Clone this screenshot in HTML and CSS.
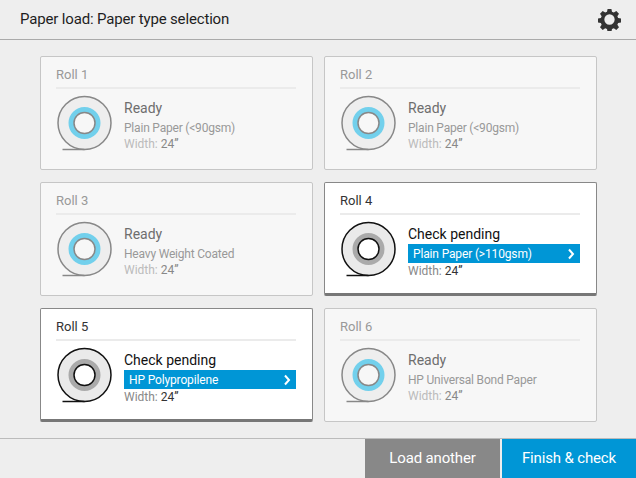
FILE: index.html
```html
<!DOCTYPE html>
<html lang="en">
<head>
<meta charset="utf-8">
<title>Paper load</title>
<link rel="stylesheet" href="styles.css">
</head>
<body>
<svg class="defs" width="0" height="0" aria-hidden="true">
  <symbol id="roll" viewBox="0 0 58 58">
    <circle class="roll-body" cx="28.5" cy="28" r="26.500"/>
    <circle class="roll-band" cx="28.5" cy="28" r="13.500"/>
    <circle class="roll-core" cx="28.5" cy="28" r="10.500"/>
    <path class="roll-tail" d="M6.500 54.500H28.500"/>
  </symbol>
</svg>
<div class="app">
  <header class="topbar">
    <h1 class="title">Paper load: Paper type selection</h1>
    <svg class="gear" viewBox="0 0 24 24" aria-hidden="true"><path fill-rule="evenodd" d="M10 1h4l.6 3 1.900.8 2.600-1.700 2.800 2.800-1.700 2.600.8 1.900 3 .6v4l-3 .6-.8 1.900 1.700 2.600-2.800 2.800-2.600-1.700-1.900.8-.6 3h-4l-.6-3-1.900-.8-2.600 1.700-2.800-2.800 1.700-2.600-.8-1.900-3-.6v-4l3-.6.8-1.900-1.700-2.600 2.800-2.800 2.600 1.700 1.900-.8zM12 6.600a5.400 5.400 0 1 0 0 10.800a5.400 5.400 0 0 0 0-10.800z"/></svg>
  </header>
  <main class="grid">
    <section class="card">
      <div class="card-title">Roll 1</div>
      <div class="card-body">
        <svg class="roll"><use href="#roll"/></svg>
        <div class="info"><div class="status">Ready</div><div class="paper">Plain Paper (&lt;90gsm)</div><div class="width"><span class="width-label">Width:</span> 24”</div></div>
      </div>
    </section>
    <section class="card">
      <div class="card-title">Roll 2</div>
      <div class="card-body">
        <svg class="roll"><use href="#roll"/></svg>
        <div class="info"><div class="status">Ready</div><div class="paper">Plain Paper (&lt;90gsm)</div><div class="width"><span class="width-label">Width:</span> 24”</div></div>
      </div>
    </section>
    <section class="card">
      <div class="card-title">Roll 3</div>
      <div class="card-body">
        <svg class="roll"><use href="#roll"/></svg>
        <div class="info"><div class="status">Ready</div><div class="paper">Heavy Weight Coated</div><div class="width"><span class="width-label">Width:</span> 24”</div></div>
      </div>
    </section>
    <section class="card active">
      <div class="card-title">Roll 4</div>
      <div class="card-body">
        <svg class="roll"><use href="#roll"/></svg>
        <div class="info"><div class="status">Check pending</div>
          <div class="picker"><span class="picker-text">Plain Paper (&gt;110gsm)</span><svg class="chev" viewBox="0 0 8 12" aria-hidden="true"><path d="M2 1.500 6 6 2 10.500"/></svg></div>
          <div class="width"><span class="width-label">Width:</span> 24”</div></div>
      </div>
    </section>
    <section class="card active">
      <div class="card-title">Roll 5</div>
      <div class="card-body">
        <svg class="roll"><use href="#roll"/></svg>
        <div class="info"><div class="status">Check pending</div>
          <div class="picker"><span class="picker-text">HP Polypropilene</span><svg class="chev" viewBox="0 0 8 12" aria-hidden="true"><path d="M2 1.500 6 6 2 10.500"/></svg></div>
          <div class="width"><span class="width-label">Width:</span> 24”</div></div>
      </div>
    </section>
    <section class="card">
      <div class="card-title">Roll 6</div>
      <div class="card-body">
        <svg class="roll"><use href="#roll"/></svg>
        <div class="info"><div class="status">Ready</div><div class="paper">HP Universal Bond Paper</div><div class="width"><span class="width-label">Width:</span> 24”</div></div>
      </div>
    </section>
  </main>
  <footer class="footer">
    <button class="btn btn-grey">Load another</button>
    <button class="btn btn-blue">Finish &amp; check</button>
  </footer>
</div>
</body>
</html>
```
FILE: styles.css
```css
* { box-sizing: border-box; }
html, body { margin: 0; padding: 0; }
body { background: #eeeeee; font-family: Roboto, "Liberation Sans", sans-serif; color: #222; overflow: hidden; }
.defs { position: absolute; }
.app { width: 636px; height: 478px; display: flex; flex-direction: column; }
.topbar { height: 40px; border-bottom: 1px solid #aaaaaa; display: flex; align-items: center; justify-content: space-between; padding: 0 15px 1px 20px; flex: none; }
.title { margin: 0; font-size: 15px; font-weight: 400; color: #1e1e1e; letter-spacing: -0.16px; }
.gear { width: 23px; height: 23px; fill: #333; }
.grid { display: grid; grid-template-columns: 273px 273px; grid-auto-rows: 114px; column-gap: 11px; row-gap: 12px; padding: 16px 0 0 40px; flex: 1; }
.card { background: #f7f7f7; border: 1px solid #c6c6c6; border-radius: 2px; padding: 0 16px 0 15px; color: #999; }
.card-title { height: 32px; border-bottom: 2px solid #ebebeb; font-size: 13px; line-height: 35px; }
.card-body { display: flex; padding-top: 6px; }
.roll { width: 58px; height: 58px; flex: none; margin-right: 10px; --body: #888; --fill: #eeeeee; --band: #72d0ec; --core: #f7f7f7; --corestroke: #888; }
.roll-body { fill: var(--fill); stroke: var(--body); stroke-width: 1.500; }
.roll-core { fill: var(--core); stroke: var(--corestroke); stroke-width: 1.500; }
.roll-band { fill: var(--band); stroke: var(--band); stroke-width: 5; }
.roll-tail { stroke: var(--body); stroke-width: 1.500; fill: none; }
.info { flex: 1; min-width: 0; }
.status { font-size: 14px; line-height: 18px; margin-top: 4px; color: #6e6e6e; }
.paper { font-size: 12px; line-height: 16px; margin-top: 3px; color: #999; letter-spacing: -0.2px; }
.width { font-size: 12px; line-height: 16px; color: #888; }
.width-label { color: #bbb; }
.active { background: #fff; border-color: #888; border-bottom: 3px solid #777; color: #333; }
.active .roll { --body: #111; --fill: #eaeaea; --band: #aaaaaa; --core: #fff; --corestroke: #111; }
.active .status { color: #111; }
.active .width { color: #333; }
.active .width-label { color: #888; }
.picker { height: 19px; background: #0096d6; color: #fff; font-size: 12px; display: flex; justify-content: space-between; align-items: center; padding: 0 5px; margin-top: 1px; letter-spacing: -0.15px; }
.picker-text { line-height: 19px; padding-top: 1px; }
.chev { width: 8px; height: 12px; fill: none; stroke: #fff; stroke-width: 2; }
.footer { height: 40px; border-top: 1px solid #bbb; display: flex; justify-content: flex-end; gap: 2px; flex: none; }
.btn { border: 0; margin: 0; padding: 0 0 1px; color: #fff; font: 400 15px Roboto, "Liberation Sans", sans-serif; height: 39px; letter-spacing: -0.15px; }
.btn-grey { width: 135px; background: #888888; }
.btn-blue { width: 134px; background: #0096d6; }
```
